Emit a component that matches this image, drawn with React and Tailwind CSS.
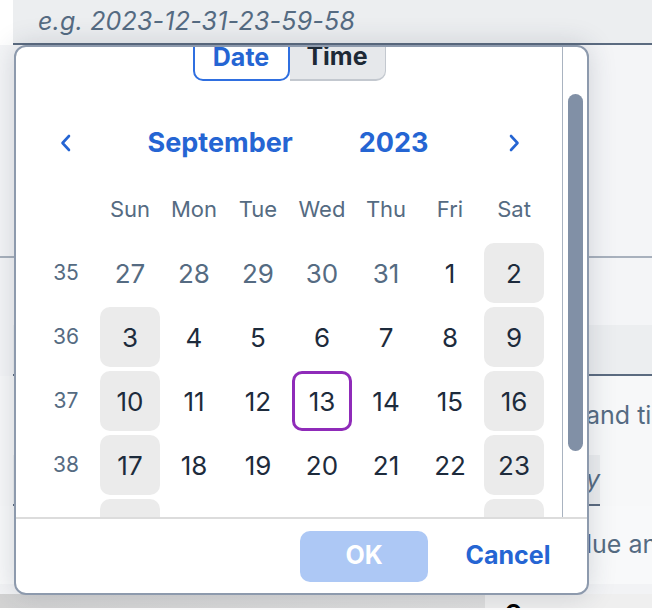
import React from "react";

const weeks = [
  { n: 35, days: [27, 28, 29, 30, 31, 1, 2], out: [0, 1, 2, 3, 4] },
  { n: 36, days: [3, 4, 5, 6, 7, 8, 9], out: [] },
  { n: 37, days: [10, 11, 12, 13, 14, 15, 16], out: [] },
  { n: 38, days: [17, 18, 19, 20, 21, 22, 23], out: [] },
  { n: 39, days: [24, 25, 26, 27, 28, 29, 30], out: [] },
];

const weekdays = ["Sun", "Mon", "Tue", "Wed", "Thu", "Fri", "Sat"];

const Chevron = ({ dir }) => (
  <svg width="14" height="20" viewBox="0 0 14 20" fill="none">
    <path
      d={dir === "left" ? "M10 3 L3.5 10 L10 17" : "M4 3 L10.5 10 L4 17"}
      stroke="#2565d3"
      strokeWidth="2.6"
      strokeLinecap="round"
      strokeLinejoin="round"
    />
  </svg>
);

const DayCell = ({ day, isOut, isWeekend }) => {
  const selected = !isOut && day === 13;
  return (
    <button
      className={`h-[60px] w-[60px] rounded-[10px] flex items-center justify-center text-[26px] ${
        isOut ? "text-[#556b82]" : "text-[#1d2b3c]"
      } ${isWeekend && !isOut ? "bg-[#ebebeb]" : ""} ${
        selected ? "border-[3px] border-[#8f2bb9]" : ""
      }`}
    >
      {day}
    </button>
  );
};

const DatePopover = () => (
  <div className="absolute left-[14px] top-[45px] w-[575px] h-[550px] flex flex-col bg-white border-2 border-[#8d9aad] rounded-[12px] shadow-[0_0_28px_rgba(40,50,70,0.18)] overflow-hidden">
    {/* scrollable calendar body */}
    <div className="flex flex-1 min-h-0">
      <div className="flex-1 overflow-hidden">
        {/* tabs, partly scrolled out of view */}
        <div className="flex justify-center -mt-[14px]">
          <button className="w-[97px] h-[48px] bg-white border-2 border-[#2f6fe0] rounded-b-[10px] text-[25px] font-bold text-[#2565d3] flex items-center justify-center pt-[2px]">
            Date
          </button>
          <button className="w-[96px] h-[48px] bg-[#e6e8eb] border-b-2 border-r border-[#c3c8cf] rounded-br-[10px] text-[25px] font-bold text-[#1d2936] flex items-center justify-center pt-[2px]">
            Time
          </button>
        </div>

        <div className="w-[508px] mx-auto pl-[2px] box-content">
          {/* month / year header */}
          <div className="flex items-center h-[48px] mt-[38px]">
            <button className="w-[60px] flex justify-center">
              <Chevron dir="left" />
            </button>
            <div className="flex-1 flex justify-center gap-[66px] pr-[4px]">
              <button className="text-[27px] font-bold text-[#2565d3]">September</button>
              <button className="text-[27px] font-bold text-[#2565d3]">2023</button>
            </div>
            <button className="w-[60px] flex justify-center">
              <Chevron dir="right" />
            </button>
          </div>

          {/* weekday names */}
          <div className="grid grid-cols-8 gap-x-[4px] h-[36px] mt-[24px] items-center">
            <div />
            {weekdays.map((w) => (
              <div key={w} className="text-center text-[22px] text-[#556b82]">
                {w}
              </div>
            ))}
          </div>

          {/* day grid */}
          <div className="grid grid-cols-8 gap-[4px] mt-[16px]">
            {weeks.map((wk) => (
              <React.Fragment key={wk.n}>
                <div className="h-[60px] flex items-center justify-center text-[21px] text-[#556b82]">
                  {wk.n}
                </div>
                {wk.days.map((d, i) => (
                  <DayCell
                    key={wk.n + "-" + i}
                    day={d}
                    isOut={wk.out.includes(i)}
                    isWeekend={i === 0 || i === 6}
                  />
                ))}
              </React.Fragment>
            ))}
          </div>
        </div>
      </div>

      {/* scrollbar */}
      <div className="w-[25px] border-l-[1.5px] border-[#a9b3c0] pl-[5px] pt-[47px]">
        <div className="w-[15px] h-[357px] rounded-full bg-[#8190a6]" />
      </div>
    </div>

    {/* footer */}
    <div className="h-[76px] border-t-2 border-[#dcdcdc] flex items-center justify-end gap-[16px] pr-[15px]">
      <button className="w-[128px] h-[51px] rounded-[10px] bg-[#adc8f5] text-white text-[25px] font-bold">
        OK
      </button>
      <button className="w-[128px] h-[51px] rounded-[10px] text-[#2565d3] text-[25px] font-bold">
        Cancel
      </button>
    </div>
  </div>
);

export default function App() {
  return (
    <div className="relative w-[652px] h-[610px] overflow-hidden bg-white font-['Inter','Noto_Sans',sans-serif]">
      {/* page behind the popover */}
      <div className="flex flex-col">
        <div className="pl-[13px]">
          <div className="h-[45px] bg-[#eceef0] border-b-2 border-[#5b6b80] flex items-center pl-[25px]">
            <span className="italic text-[25px] text-[#556b82] tracking-[0.2px]">e.g. 2023-12-31-23-59-58</span>
          </div>
        </div>
        <div className="h-[211px] bg-[#f4f5f7]" />
        <div className="h-[2px] bg-[#a8b1bd]" />
        <div className="h-[67px] bg-[#f4f5f7]" />
        <div className="pl-[13px] bg-[#f4f5f7]">
          <div className="h-[51px] bg-[#eceef0] border-b-2 border-[#5b6b80]" />
        </div>
        <div className="h-[79px] flex items-center bg-[#f7f8f9] whitespace-nowrap overflow-hidden">
          <span className="pl-[586px] text-[25px] text-[#556b82]">and time</span>
        </div>
        <div className="pl-[13px] bg-[#f7f8f9]">
          <div className="h-[51px] bg-[#eceef0] border-b-2 border-[#5b6b80] flex items-center justify-end w-[587px]">
            <span className="italic text-[25px] text-[#556b82]">yyyy</span>
          </div>
        </div>
        <div className="h-[78px] flex items-center bg-[#f8f9fa] whitespace-nowrap overflow-hidden">
          <span className="pl-[586px] text-[25px] text-[#556b82]">lue and</span>
        </div>
        <div className="h-[10px] bg-[#f2f3f5]" />
        <div className="h-[14px] flex">
          <div className="w-[485px] bg-gradient-to-r from-[#d3d3d3] to-[#dedede]" />
          <div className="flex-1 bg-[#efefef] overflow-hidden pl-[20px] pt-[7px]">
            <span className="block text-[22px] leading-none font-bold text-black">O</span>
          </div>
        </div>
      </div>

      <DatePopover />
    </div>
  );
}
